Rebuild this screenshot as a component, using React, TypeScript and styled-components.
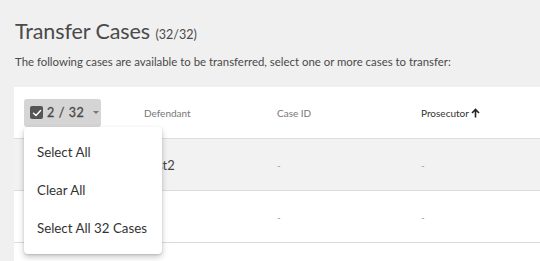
import React from 'react';
import styled, { createGlobalStyle } from 'styled-components';

const GlobalStyle = createGlobalStyle`
  html, body {
    margin: 0;
    padding: 0;
    background: #f0f0f0;
    overflow: hidden;
  }
  body {
    font-family: Lato, "Noto Sans", sans-serif;
  }
`;

const Page = styled.div`
  width: 100%;
  height: 261px;
  overflow: hidden;
  padding: 16px 0 0 14px;
  box-sizing: border-box;
`;

const Title = styled.h1`
  margin: 0 0 0 1px;
  font-size: 21.5px;
  font-weight: 400;
  color: #4a4a4a;
  line-height: 30px;
  letter-spacing: -0.1px;
`;

const Count = styled.span`
  font-size: 12.5px;
  letter-spacing: 0;
`;

const Description = styled.p`
  margin: 4px 0 0 1px;
  font-size: 11.4px;
  color: #4a4a4a;
  line-height: 16px;
`;

const Table = styled.div`
  position: relative;
  margin-top: 17px;
  background: #fff;
`;

const Row = styled.div<{ $shaded?: boolean }>`
  display: grid;
  grid-template-columns: 130px 133px 144px 1fr;
  align-items: center;
  height: 52px;
  background: ${p => (p.$shaded ? '#f2f2f2' : '#fff')};
  border-bottom: 1px solid #dcdcdc;
  box-sizing: border-box;
`;

const HeadCell = styled.div<{ $active?: boolean }>`
  font-size: 10px;
  color: ${p => (p.$active ? '#333' : '#777')};
  display: flex;
  align-items: center;
  gap: 2px;
`;

const Cell = styled.div`
  font-size: 13px;
  color: #444;
`;

const Dash = styled.div`
  font-size: 10px;
  color: #999;
`;

const SelectCell = styled.div`
  padding-left: 10px;
`;

const SelectButton = styled.div`
  display: inline-flex;
  align-items: center;
  width: 77px;
  height: 28px;
  box-sizing: border-box;
  padding-left: 6px;
  background: #d5d5d5;
  border-radius: 3px;
  color: #4a4a4a;
  font-size: 12.5px;
  font-weight: 400;
  letter-spacing: 0.6px;
  -webkit-text-stroke: 0.3px #4a4a4a;
`;

const Box = styled.span`
  width: 13px;
  height: 13px;
  border-radius: 2px;
  background: #555;
  display: inline-flex;
  align-items: center;
  justify-content: center;
  margin-right: 4px;
`;

const Caret = styled.span`
  margin-left: 9px;
  width: 0;
  height: 0;
  border-left: 3px solid transparent;
  border-right: 3px solid transparent;
  border-top: 3px solid #777;
`;

const Menu = styled.div`
  position: absolute;
  left: 10px;
  top: 40px;
  width: 138px;
  padding: 6px 0 7px;
  background: #fff;
  border-radius: 4px;
  box-shadow: 0 3px 6px rgba(0, 0, 0, 0.22), 0 1px 2px rgba(0, 0, 0, 0.12);
  z-index: 2;
`;

const MenuItem = styled.div`
  height: 38px;
  display: flex;
  align-items: center;
  padding-left: 13px;
  font-size: 13.3px;
  color: #333;
`;

const Check = () => (
  <svg width="10" height="10" viewBox="0 0 10 10">
    <path d="M1.5 5.2 L4 7.5 L8.6 2.6" fill="none" stroke="#fff" strokeWidth="1.4" strokeLinecap="round" strokeLinejoin="round" />
  </svg>
);

const ArrowUp = () => (
  <svg width="9" height="10" viewBox="0 0 9 10">
    <path d="M4.5 9.5 V1.8 M1 5 L4.5 1.4 L8 5" fill="none" stroke="#222" strokeWidth="1.6" />
  </svg>
);

const rows = [
  { defendant: 'Test2', caseId: '-', prosecutor: '-' },
  { defendant: '', caseId: '-', prosecutor: '-' },
  { defendant: '', caseId: '', prosecutor: '' },
];

const App: React.FC = () => {
  return (
    <>
      <GlobalStyle />
      <Page>
        <Title>
          Transfer Cases <Count>(32/32)</Count>
        </Title>
        <Description>
          The following cases are available to be transferred, select one or more cases to transfer:
        </Description>

        <Table>
          <Row>
            <SelectCell>
              <SelectButton>
                <Box><Check /></Box>
                2 / 32
                <Caret />
              </SelectButton>
            </SelectCell>
            <HeadCell>Defendant</HeadCell>
            <HeadCell>Case ID</HeadCell>
            <HeadCell $active>
              Prosecutor <ArrowUp />
            </HeadCell>
          </Row>
          {rows.map((row, i) => (
            <Row key={i} $shaded={i === 0}>
              <div />
              <Cell>{row.defendant}</Cell>
              <Dash>{row.caseId}</Dash>
              <Dash>{row.prosecutor}</Dash>
            </Row>
          ))}

          <Menu>
            <MenuItem>Select All</MenuItem>
            <MenuItem>Clear All</MenuItem>
            <MenuItem>Select All 32 Cases</MenuItem>
          </Menu>
        </Table>
      </Page>
    </>
  );
};

export default App;
